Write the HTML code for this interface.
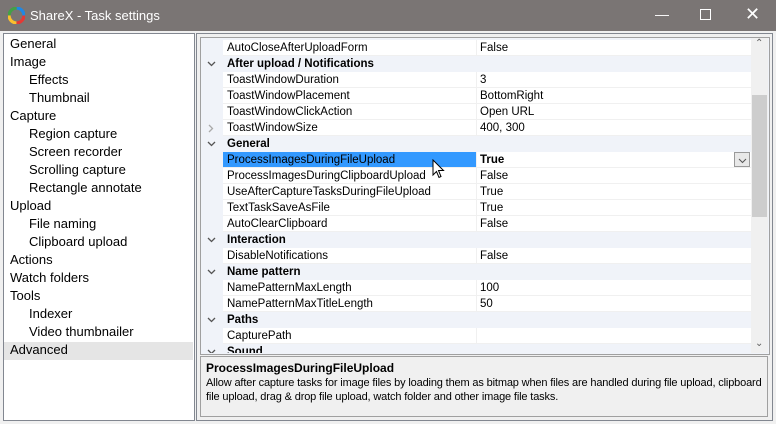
<!DOCTYPE html><html><head><style>
body{margin:0;width:776px;height:424px;background:#f0f0f0;font-family:"Liberation Sans",sans-serif;position:relative;overflow:hidden}
.t{position:absolute;left:0;top:0;width:776px;height:31px;background:#7a7574;color:#fff;font-size:13px}
.box{position:absolute;background:#fff;border:1px solid #828790}
.li{position:absolute;font-size:13px;color:#000;height:18px;line-height:18px}
.row{position:absolute;left:202px;width:549px;height:16px;font-size:11.5px;line-height:16px}
.n{position:absolute;left:22px;width:249px;height:15px;background:#fff;padding-left:4px;border-bottom:1px solid #f0f0f0}
.v{position:absolute;left:275px;width:271px;height:15px;background:#fff;padding-left:3px;border-bottom:1px solid #f0f0f0;border-left:1px solid #f0f0f0}
.c{background:#f0f3f9;font-weight:bold}
.c span.l{position:absolute;left:26px}
.row svg.ch{position:absolute;left:6px;top:5px}
</style></head><body>
<div class="t"><svg style="position:absolute;left:8px;top:7px" width="17" height="17" viewBox="0 0 16 16"><circle cx="8" cy="8" r="7" fill="none" stroke="#e53935" stroke-width="3" stroke-dasharray="11 33"/><circle cx="8" cy="8" r="7" fill="none" stroke="#fbc02d" stroke-width="3" stroke-dasharray="0 11 11 22"/><circle cx="8" cy="8" r="7" fill="none" stroke="#43a047" stroke-width="3" stroke-dasharray="0 22 11 11"/><circle cx="8" cy="8" r="7" fill="none" stroke="#1e88e5" stroke-width="3" stroke-dasharray="0 33 11 0"/></svg>
<span style="position:absolute;left:30px;top:8px">ShareX - Task settings</span>
<span style="position:absolute;left:655px;top:6px;font-size:14px">&#8212;</span>
<span style="position:absolute;left:700px;top:9px;width:9px;height:9px;border:1px solid #fff"></span>
<span style="position:absolute;left:745px;top:4px;font-size:18px">&#10005;</span></div>
<div class="box" style="left:3px;top:33px;width:190px;height:386px"></div>
<div style="position:absolute;left:4px;top:342px;width:189px;height:18px;background:#e5e5e5"></div>
<div class="li" style="left:10px;top:35px">General</div>
<div class="li" style="left:10px;top:53px">Image</div>
<div class="li" style="left:29px;top:71px">Effects</div>
<div class="li" style="left:29px;top:89px">Thumbnail</div>
<div class="li" style="left:10px;top:107px">Capture</div>
<div class="li" style="left:29px;top:125px">Region capture</div>
<div class="li" style="left:29px;top:143px">Screen recorder</div>
<div class="li" style="left:29px;top:161px">Scrolling capture</div>
<div class="li" style="left:29px;top:179px">Rectangle annotate</div>
<div class="li" style="left:10px;top:197px">Upload</div>
<div class="li" style="left:29px;top:215px">File naming</div>
<div class="li" style="left:29px;top:233px">Clipboard upload</div>
<div class="li" style="left:10px;top:251px">Actions</div>
<div class="li" style="left:10px;top:269px">Watch folders</div>
<div class="li" style="left:10px;top:287px">Tools</div>
<div class="li" style="left:29px;top:305px">Indexer</div>
<div class="li" style="left:29px;top:323px">Video thumbnailer</div>
<div class="li" style="left:10px;top:341px">Advanced</div>
<div style="position:absolute;left:196px;top:33px;width:575px;height:386px;border:1px solid #828790"></div>
<div style="position:absolute;left:200px;top:37px;width:568px;height:316px;border:1px solid #a0a0a0;background:#f0f3f9;overflow:hidden">
</div>
<div style="position:absolute;left:751px;top:38px;width:17px;height:315px;background:#f0f0f0"><div style="position:absolute;left:1px;top:57px;width:15px;height:122px;background:#cdcdcd"></div><span style="position:absolute;left:4px;top:0;font-size:10px;color:#606060">&#8963;</span><span style="position:absolute;left:4px;top:300px;font-size:10px;color:#606060">&#8964;</span></div>
<div style="position:absolute;left:201px;top:38px;width:550px;height:315px;overflow:hidden">
<div class="row" style="left:0;top:2px"><div class="n">AutoCloseAfterUploadForm</div><div class="v">False</div></div>
<div class="row c" style="left:0;top:18px"><svg class="ch" width="9" height="6"><path d="M1 1L4.5 4.5L8 1" fill="none" stroke="#555" stroke-width="1.3"/></svg><span class="l">After upload / Notifications</span></div>
<div class="row" style="left:0;top:34px"><div class="n">ToastWindowDuration</div><div class="v">3</div></div>
<div class="row" style="left:0;top:50px"><div class="n">ToastWindowPlacement</div><div class="v">BottomRight</div></div>
<div class="row" style="left:0;top:66px"><div class="n">ToastWindowClickAction</div><div class="v">Open URL</div></div>
<div class="row" style="left:0;top:82px"><svg style="position:absolute;left:7px;top:4px" width="6" height="9"><path d="M1 1L4.5 4.5L1 8" fill="none" stroke="#aaa" stroke-width="1.3"/></svg><div class="n">ToastWindowSize</div><div class="v">400, 300</div></div>
<div class="row c" style="left:0;top:98px"><svg class="ch" width="9" height="6"><path d="M1 1L4.5 4.5L8 1" fill="none" stroke="#555" stroke-width="1.3"/></svg><span class="l">General</span></div>
<div class="row" style="left:0;top:114px"><div class="n" style="background:#3399ff">ProcessImagesDuringFileUpload</div><div class="v" style="font-weight:bold">True<div style="position:absolute;right:1px;top:0;width:14px;height:13px;border:1px solid #999;background:#e8e8e8"><svg style="position:absolute;left:3px;top:5px" width="9" height="6"><path d="M1 1L4.5 4.5L8 1" fill="none" stroke="#555"/></svg></div></div></div>
<div class="row" style="left:0;top:130px"><div class="n">ProcessImagesDuringClipboardUpload</div><div class="v">False</div></div>
<div class="row" style="left:0;top:146px"><div class="n">UseAfterCaptureTasksDuringFileUpload</div><div class="v">True</div></div>
<div class="row" style="left:0;top:162px"><div class="n">TextTaskSaveAsFile</div><div class="v">True</div></div>
<div class="row" style="left:0;top:178px"><div class="n">AutoClearClipboard</div><div class="v">False</div></div>
<div class="row c" style="left:0;top:194px"><svg class="ch" width="9" height="6"><path d="M1 1L4.5 4.5L8 1" fill="none" stroke="#555" stroke-width="1.3"/></svg><span class="l">Interaction</span></div>
<div class="row" style="left:0;top:210px"><div class="n">DisableNotifications</div><div class="v">False</div></div>
<div class="row c" style="left:0;top:226px"><svg class="ch" width="9" height="6"><path d="M1 1L4.5 4.5L8 1" fill="none" stroke="#555" stroke-width="1.3"/></svg><span class="l">Name pattern</span></div>
<div class="row" style="left:0;top:242px"><div class="n">NamePatternMaxLength</div><div class="v">100</div></div>
<div class="row" style="left:0;top:258px"><div class="n">NamePatternMaxTitleLength</div><div class="v">50</div></div>
<div class="row c" style="left:0;top:274px"><svg class="ch" width="9" height="6"><path d="M1 1L4.5 4.5L8 1" fill="none" stroke="#555" stroke-width="1.3"/></svg><span class="l">Paths</span></div>
<div class="row" style="left:0;top:290px"><div class="n">CapturePath</div><div class="v"></div></div>
<div class="row c" style="left:0;top:306px"><svg class="ch" width="9" height="6"><path d="M1 1L4.5 4.5L8 1" fill="none" stroke="#555" stroke-width="1.3"/></svg><span class="l">Sound</span></div>
</div>
<svg style="position:absolute;left:432px;top:159px" width="14" height="20" viewBox="0 0 14 20"><path d="M1 1V16L4.5 12.5L7 18.5L9 17.5L6.5 11.5H11.5Z" fill="#fff" stroke="#000"/></svg>
<div style="position:absolute;left:200px;top:356px;width:566px;height:59px;border:1px solid #a0a0a0;background:#f0f0f0;font-size:11px">
<div style="position:absolute;left:5px;top:4px;font-weight:bold;font-size:12px">ProcessImagesDuringFileUpload</div>
<div style="position:absolute;left:5px;top:19px;width:562px;line-height:14px;letter-spacing:-0.15px">Allow after capture tasks for image files by loading them as bitmap when files are handled during file upload, clipboard file upload, drag &amp; drop file upload, watch folder and other image file tasks.</div></div>
</body></html>
